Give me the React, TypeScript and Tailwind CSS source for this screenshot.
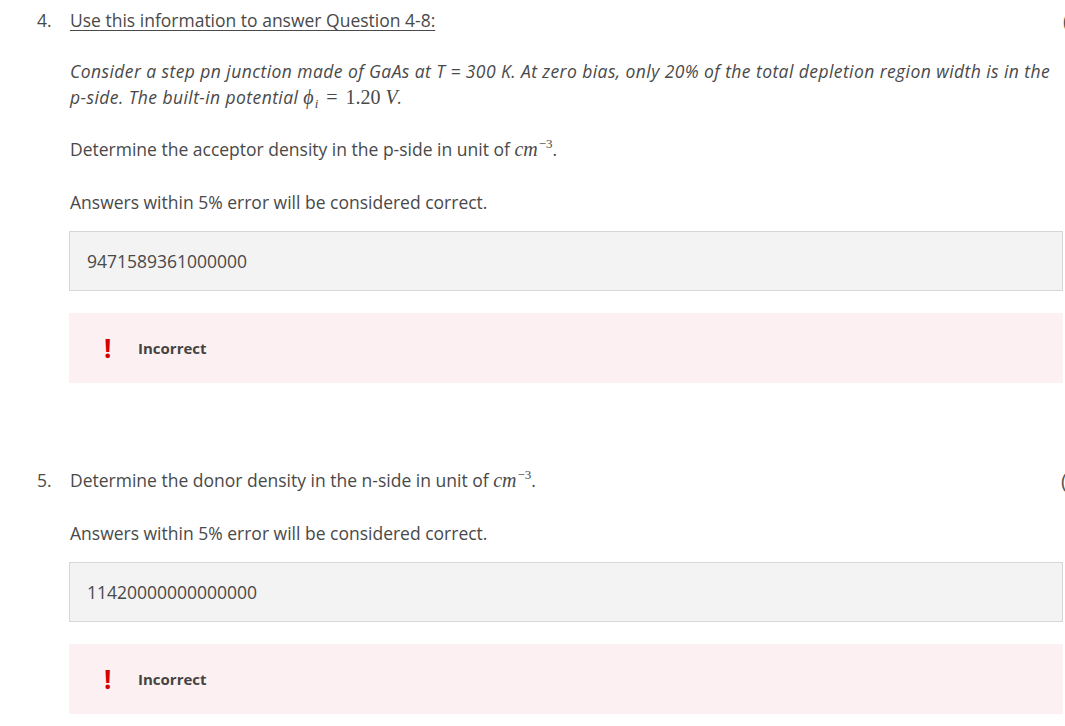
const Incorrect = () => (
  <div className="-ml-[1px] mt-[22px] flex h-[70px] items-center bg-[#fdf0f2]">
    <span className="ml-[35px] w-[34px] text-[26px] font-bold leading-none text-[#d40000]">!</span>
    <span className="text-[15px] font-bold text-[#444]">Incorrect</span>
  </div>
);

const Answer = ({ value }: { value: string }) => (
  <div className="-ml-[1px] mt-[17px] flex h-[60px] items-center border border-[#d7d7d7] bg-[#f3f3f3] px-[17px] text-[17.5px] text-[#494949]">
    {value}
  </div>
);

const CmUnit = () => (
  <span className="font-['Liberation_Serif',serif] leading-[0]">
    <span className="text-[20px] italic leading-[0]">cm</span>
    <sup className="relative -top-[8px] ml-[1px] text-[13px] leading-[0]">−3</sup>
  </span>
);

export default function App() {
  return (
    <div className="min-h-screen w-full overflow-hidden bg-white font-['Open_Sans',sans-serif] text-[17.5px] text-[#494949]">
      <div className="relative pt-[8px] pr-[2px]">
        {/* question 4 */}
        <div className="flex">
          <div className="w-[70px] pl-[37px] leading-[24px]">4.</div>
          <div className="flex-1">
            <div className="leading-[24px] underline underline-offset-[3px]">Use this information to answer Question 4-8:</div>
            <p className="mt-[26px] whitespace-nowrap italic leading-[26px] tracking-[0.42px]">
              Consider a step pn junction made of GaAs at T = 300 K. At zero bias, only 20% of the total depletion region width is in the
              <br />
              p-side. The built-in potential{" "}
              <span className="font-['Liberation_Serif',serif] text-[20px] not-italic leading-[0] tracking-normal">
                <span className="italic">ϕ</span>
                <span className="relative top-[4px] ml-[1px] text-[13px] italic">i</span>
                <span className="mx-[8px]">=</span>1.20 <span className="italic">V</span>
              </span>
              .
            </p>
            <p className="mt-[27px] leading-[24px]">
              Determine the acceptor density in the p-side in unit of <CmUnit />.
            </p>
            <p className="mt-[29px] leading-[24px]">Answers within 5% error will be considered correct.</p>
            <Answer value="9471589361000000" />
            <Incorrect />
          </div>
          <div className="absolute -right-[4px] top-[6px] text-[20px] text-[#555]">(</div>
        </div>

        {/* question 5 */}
        <div className="relative mt-[85px] flex">
          <div className="w-[70px] pl-[37px] leading-[24px]">5.</div>
          <div className="flex-1">
            <p className="leading-[24px]">
              Determine the donor density in the n-side in unit of <CmUnit />.
            </p>
            <p className="mt-[29px] leading-[24px]">Answers within 5% error will be considered correct.</p>
            <Answer value="11420000000000000" />
            <Incorrect />
          </div>
          <div className="absolute -right-[4px] -top-[2px] text-[20px] text-[#555]">(</div>
        </div>
      </div>
    </div>
  );
}
